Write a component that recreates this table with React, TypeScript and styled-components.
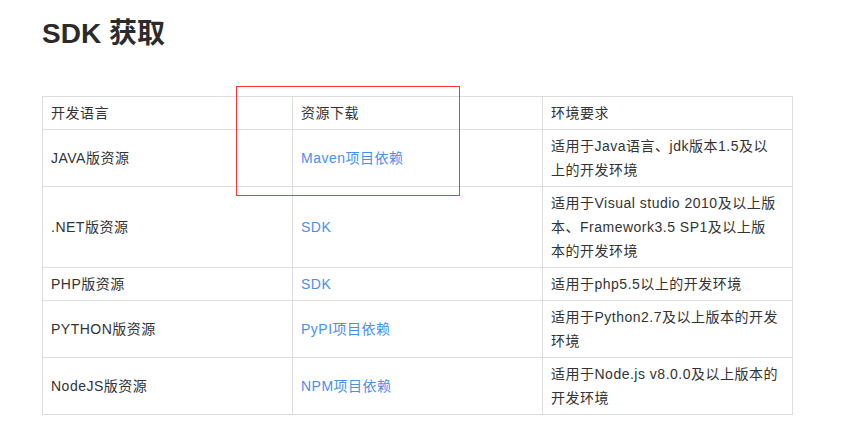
import React from 'react';
import styled, { createGlobalStyle } from 'styled-components';

const GlobalStyle = createGlobalStyle`
	body {
		margin: 0;
		background: #ffffff;
		font-family: 'Liberation Sans', 'Noto Sans CJK SC', sans-serif;
		color: #333333;
	}
`;

type Row = {
	lang: string;
	link: string;
	env: string[];
};

// env lines are kept as they wrap on the original page
const rows: Row[] = [
	{ lang: 'JAVA版资源', link: 'Maven项目依赖', env: ['适用于Java语言、jdk版本1.5及以', '上的开发环境'] },
	{
		lang: '.NET版资源',
		link: 'SDK',
		env: ['适用于Visual studio 2010及以上版', '本、Framework3.5 SP1及以上版', '本的开发环境'],
	},
	{ lang: 'PHP版资源', link: 'SDK', env: ['适用于php5.5以上的开发环境'] },
	{ lang: 'PYTHON版资源', link: 'PyPI项目依赖', env: ['适用于Python2.7及以上版本的开发', '环境'] },
	{ lang: 'NodeJS版资源', link: 'NPM项目依赖', env: ['适用于Node.js v8.0.0及以上版本的', '开发环境'] },
];

const SdkSection = () => {
	return (
		<Page>
			<GlobalStyle />
			<Title>SDK 获取</Title>
			<Table>
				<colgroup>
					<col style={{ width: 250 }} />
					<col style={{ width: 250 }} />
					<col style={{ width: 250 }} />
				</colgroup>
				<thead>
					<tr>
						<Cell as='th'>开发语言</Cell>
						<Cell as='th'>资源下载</Cell>
						<Cell as='th'>环境要求</Cell>
					</tr>
				</thead>
				<tbody>
					{rows.map((r) => (
						<tr key={r.lang}>
							<Cell>{r.lang}</Cell>
							<Cell>
								<DownloadLink href='#'>{r.link}</DownloadLink>
							</Cell>
							<Cell>
								{r.env.map((line, i) => (
									<React.Fragment key={i}>
										{i > 0 && <br />}
										{line}
									</React.Fragment>
								))}
							</Cell>
						</tr>
					))}
				</tbody>
			</Table>
			{/* red annotation box drawn over the download column */}
			<Highlight />
		</Page>
	);
};

const Page = styled.div`
	position: relative;
	padding: 16px 0 0 42px;
	width: 865px;
	height: 428px;
	box-sizing: border-box;
	overflow: hidden;
`;

const Title = styled.h2`
	margin: 0 0 44px 0;
	font-size: 28px;
	line-height: 36px;
	font-weight: 700;
	color: #2b2b2b;
`;

const Table = styled.table`
	border-collapse: collapse;
	table-layout: fixed;
	width: 751px;
	font-size: 14px;
	letter-spacing: 0.5px;
`;

const Cell = styled.td`
	border: 1px solid #dddddd;
	padding: 4px 8px;
	line-height: 24px;
	text-align: left;
	font-weight: 400;
	vertical-align: middle;
	color: #333333;
	white-space: nowrap;
`;

const DownloadLink = styled.a`
	color: #4a8ff0;
	text-decoration: none;
`;

const Highlight = styled.div`
	position: absolute;
	left: 236px;
	top: 86px;
	width: 224px;
	height: 110px;
	box-sizing: border-box;
	border: 1px solid #ff3636;
	pointer-events: none;
`;

export default SdkSection;
